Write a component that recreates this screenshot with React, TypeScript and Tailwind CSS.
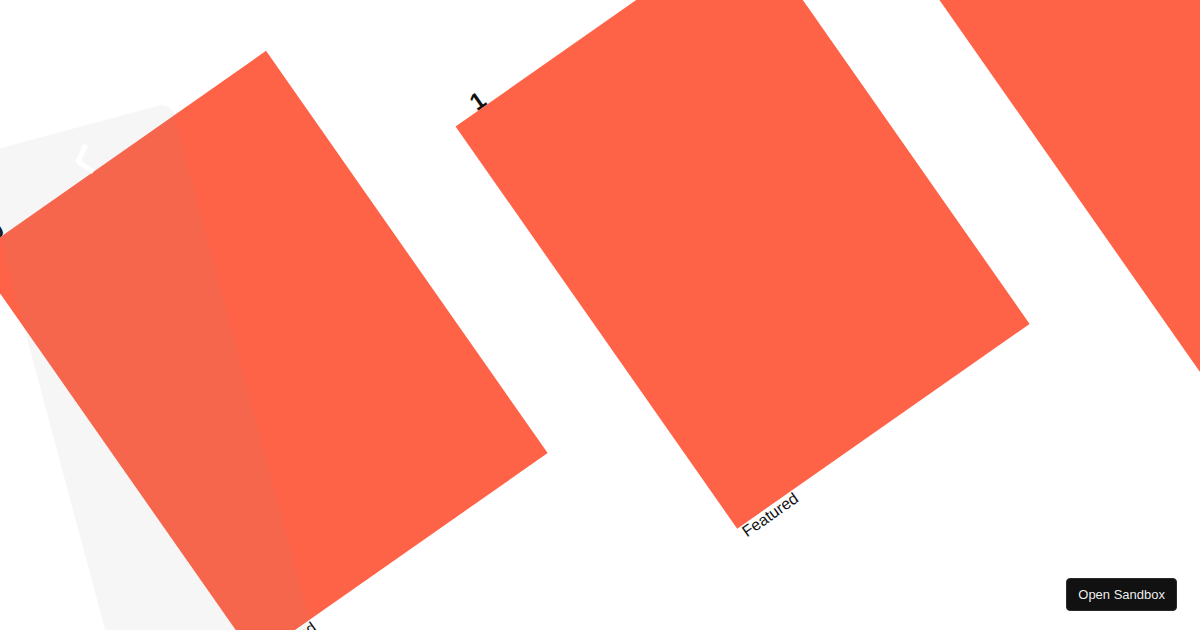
const slides = [
  { id: 0, label: "Featured" },
  { id: 1, label: "Featured" },
  { id: 2, label: "Featured" },
];

function Slide({ index, label }: { index: number; label: string }) {
  return (
    <div className="relative h-[491px] w-[357px] shrink-0 rotate-[-20deg]">
      <span className="absolute left-[26px] top-[-20px] text-[24px] font-bold leading-none text-[#111]">
        {index}
      </span>
      <div className="relative h-full w-full bg-[#ff6347]" />
      <span className="absolute left-[3px] top-full text-[16px] leading-none text-[#111]">
        {label}
      </span>
    </div>
  );
}

export default function App() {
  return (
    <div className="relative h-[630px] w-[1200px] overflow-hidden bg-white font-['Liberation_Sans',Arial,sans-serif]">
      {/* carousel track, tilted as a whole */}
      <div className="absolute left-[259.5px] top-[353.5px] h-0 w-0 origin-top-left rotate-[-15deg]">
        <div className="absolute left-[-178.5px] top-[-245.5px] flex w-max gap-[142px]">
          {slides.map((s) => (
            <Slide key={s.id} index={s.id} label={s.label} />
          ))}
        </div>

        {/* previous-slide control */}
        <div className="absolute left-[-221px] top-[-266px] h-[620px] w-[200px] rounded-xl bg-[rgba(140,140,140,0.08)]">
          <svg
            className="absolute left-[92px] top-[17px]"
            width="18"
            height="32"
            viewBox="0 0 18 32"
            fill="none"
          >
            <polyline
              points="15,2 3,16 15,30"
              stroke="white"
              strokeWidth="5"
              strokeLinejoin="round"
            />
          </svg>
        </div>
      </div>

      <button className="absolute bottom-[19px] right-[23px] h-[33px] rounded-[4px] border border-[#2a2a2a] bg-[#111] px-[11px] text-[13px] text-white/95">
        Open Sandbox
      </button>
    </div>
  );
}
